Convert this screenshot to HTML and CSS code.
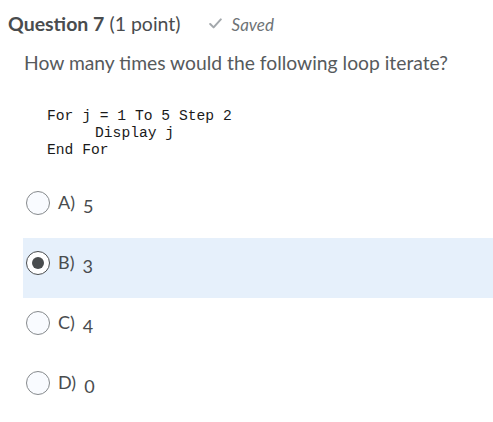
FILE: index.html
```html
<!DOCTYPE html>
<html>
<head>
<meta charset="utf-8">
<link rel="stylesheet" href="styles.css">
</head>
<body>
<div class="page">
  <div class="header">
    <h2 class="title"><span class="qnum">Question 7</span> <span class="points">(1 point)</span></h2>
    <div class="saved">
      <svg class="check" width="13" height="11" viewBox="0 0 13 11"><path d="M1.2 6 L4.6 9.4 L11.8 1.4" fill="none" stroke="#a3a8ac" stroke-width="2" stroke-linecap="round" stroke-linejoin="round"/></svg>
      <span class="saved-text">Saved</span>
    </div>
  </div>
  <div class="body">
    <p class="prompt">How many times would the following loop iterate?</p>
    <div class="code">
      <div class="line">For j = 1 To 5 Step 2</div>
      <div class="line indent">Display j</div>
      <div class="line">End For</div>
    </div>
    <div class="options">
      <label class="option"><span class="radio"></span><span class="letter">A)</span><span class="value">5</span></label>
      <label class="option selected"><span class="radio checked"></span><span class="letter">B)</span><span class="value">3</span></label>
      <label class="option"><span class="radio"></span><span class="letter">C)</span><span class="value">4</span></label>
      <label class="option"><span class="radio"></span><span class="letter">D)</span><span class="value">0</span></label>
    </div>
  </div>
</div>
</body>
</html>
```
FILE: styles.css
```css
html, body {
  margin: 0;
  padding: 0;
  background: #ffffff;
}
body {
  font-family: Lato, "Noto Sans", sans-serif;
  color: #494c4e;
}
.page {
  width: 493px;
  height: 422px;
  overflow: hidden;
}
.header {
  display: flex;
  align-items: baseline;
  padding: 11px 0 0 8px;
  height: 35px;
}
.title {
  margin: 0;
  font-size: 19.5px;
  line-height: 26px;
  font-weight: normal;
  color: #494c4e;
}
.qnum {
  font-weight: bold;
}
.points {
  font-weight: normal;
}
.saved {
  display: flex;
  align-items: baseline;
  margin-left: 28px;
  gap: 10px;
}
.check {
  align-self: center;
  position: relative;
  top: -1px;
}
.saved-text {
  font-style: italic;
  font-size: 17px;
  color: #6e7376;
}
.body {
  padding: 0 0 0 23px;
}
.prompt {
  margin: 0;
  padding: 4px 0 0 1px;
  font-size: 19.3px;
  line-height: 26px;
  color: #565a5c;
}
.code {
  margin: 32px 0 0 24px;
  font-family: "Liberation Mono", "Courier New", monospace;
  font-size: 14.67px;
  line-height: 17px;
  color: #1a1a1a;
}
.line {
  white-space: pre;
}
.indent {
  padding-left: 48px;
}
.options {
  margin-top: 19px;
  display: flex;
  flex-direction: column;
}
.option {
  display: flex;
  align-items: flex-start;
  height: 60px;
  box-sizing: border-box;
  padding: 13px 0 0 3px;
}
.option.selected {
  background: #e6f0fb;
}
.radio {
  width: 24px;
  height: 24px;
  box-sizing: border-box;
  border: 1px solid #868a8d;
  border-radius: 50%;
  background: #f9fbff;
  display: flex;
  align-items: center;
  justify-content: center;
  flex: none;
}
.radio.checked {
  border-color: #494c4e;
  background: #ffffff;
}
.radio.checked::after {
  content: "";
  width: 12px;
  height: 12px;
  border-radius: 50%;
  background: #494c4e;
}
.letter {
  margin-left: 8px;
  font-size: 18px;
  line-height: 22px;
  color: #494c4e;
}
.value {
  margin-left: 8px;
  margin-top: 4px;
  font-size: 18px;
  line-height: 22px;
  color: #494c4e;
}
```
